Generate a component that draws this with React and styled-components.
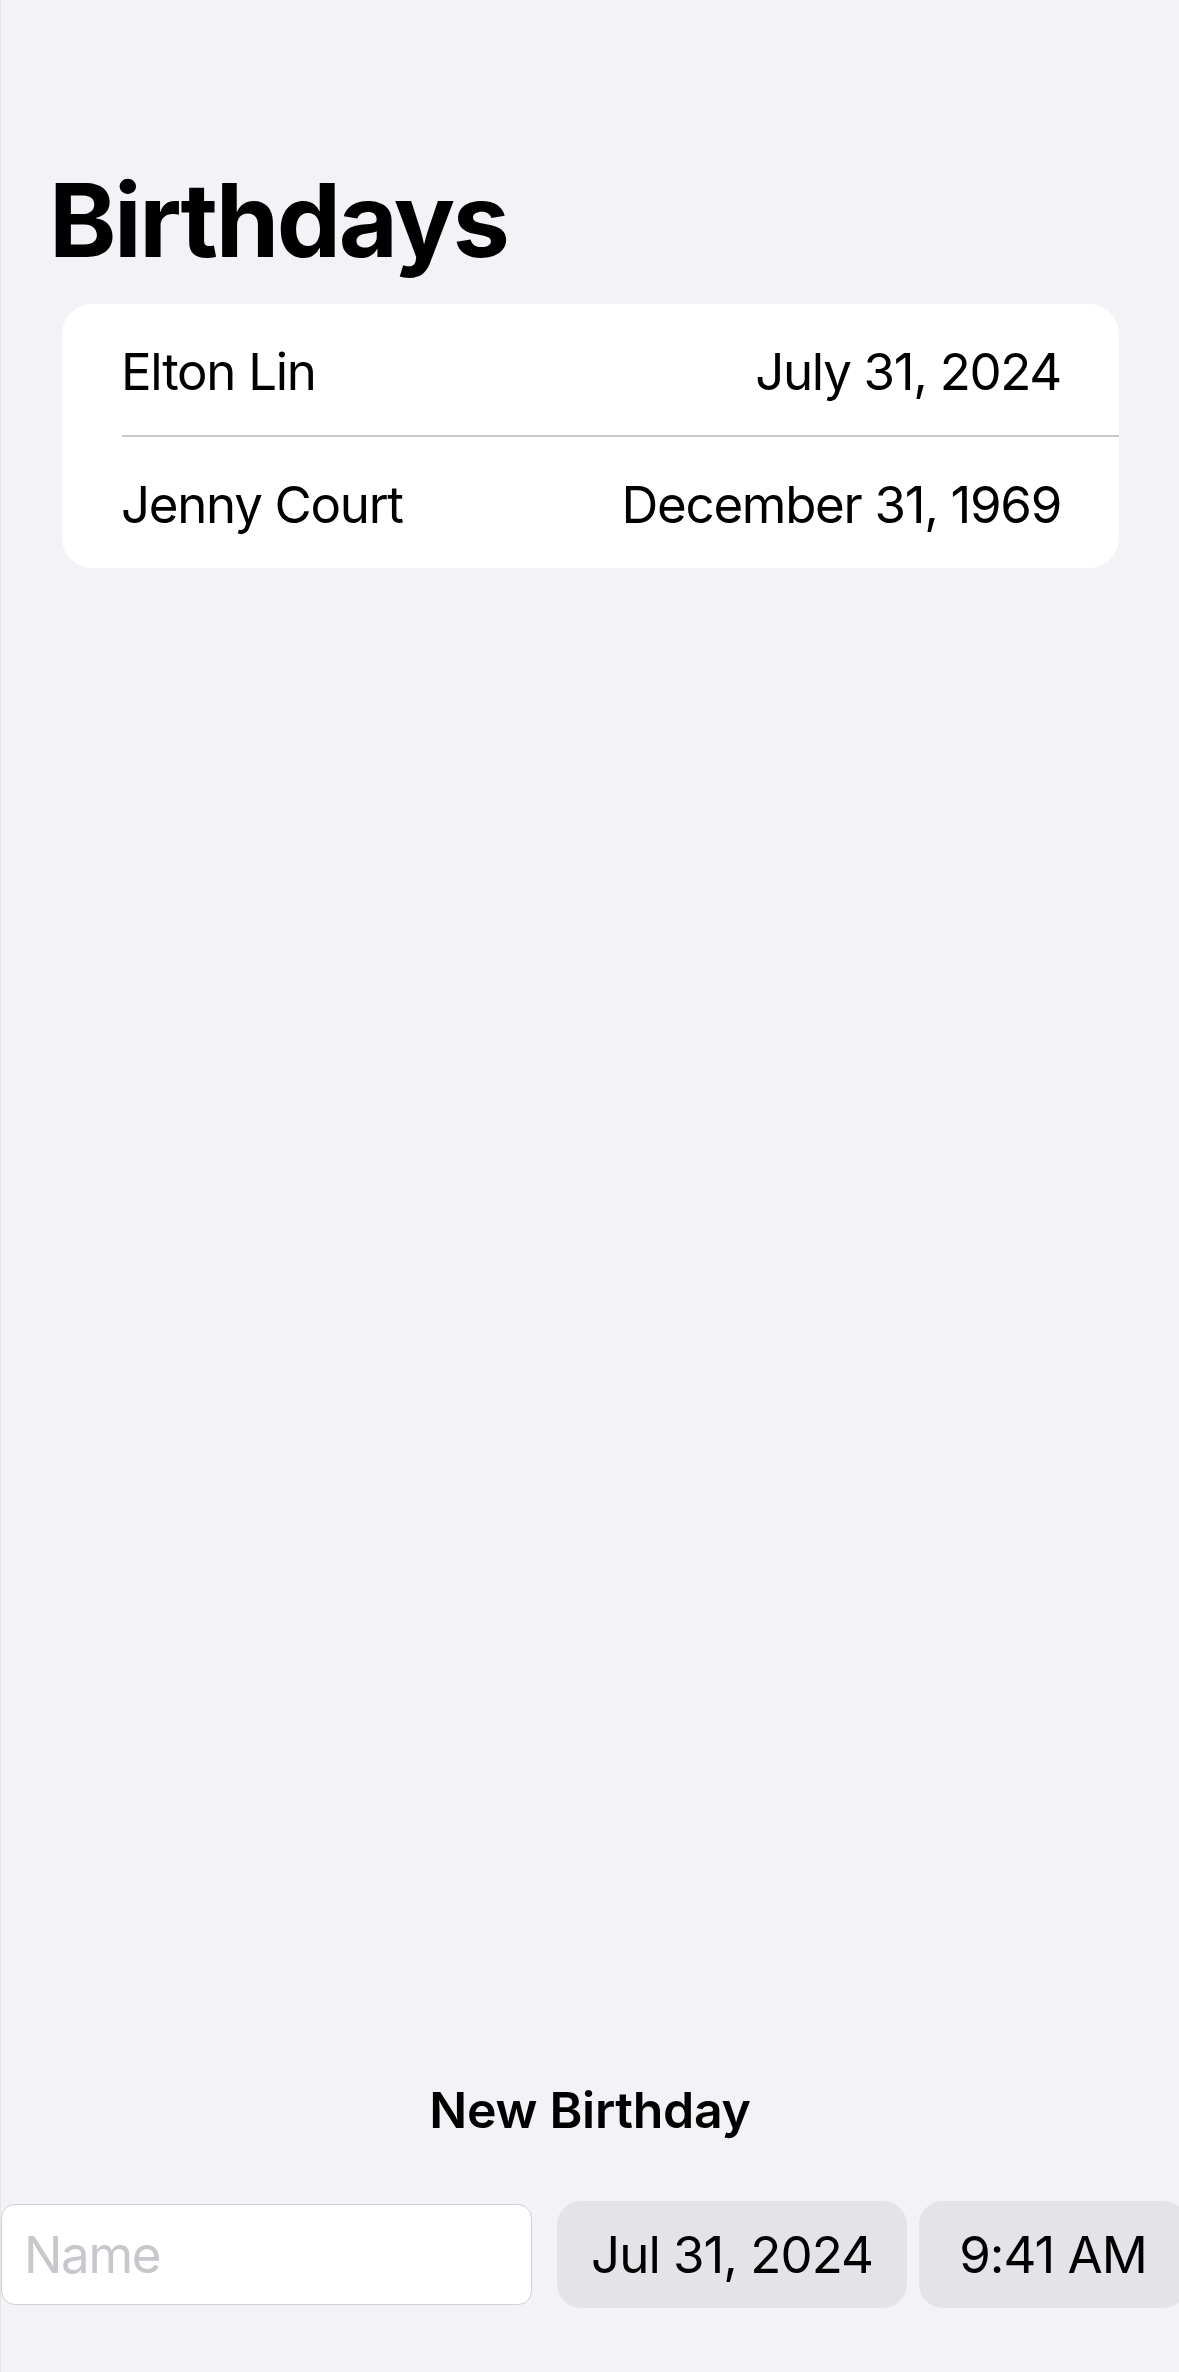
import React from 'react';
import styled, { createGlobalStyle } from 'styled-components';

const GlobalStyle = createGlobalStyle`
  html, body {
    margin: 0;
    padding: 0;
    background: #f2f2f7;
  }
  body {
    font-family: Inter, "Noto Sans", "Liberation Sans", sans-serif;
    -webkit-font-smoothing: antialiased;
  }
`;

const Page = styled.div`
  display: flex;
  flex-direction: column;
  width: 1179px;
  height: 2372px;
  box-sizing: border-box;
  background: #f2f2f7;
  border-left: 1px solid #e6e6eb;
  overflow: hidden;
`;

const Title = styled.h1`
  margin: 159px 0 0 48px;
  font-size: 102px;
  line-height: 1.2;
  font-weight: 700;
  letter-spacing: -2.4px;
  color: #000;
`;

const Card = styled.div`
  margin: 23px 60px 0 61px;
  background: #fff;
  border-radius: 30px;
  overflow: hidden;
`;

const Row = styled.div`
  display: flex;
  align-items: center;
  justify-content: space-between;
  height: 131px;
  box-sizing: border-box;
  padding: 4px 58px 0 59px;
  font-size: 51px;
  line-height: 1.2;
  letter-spacing: -1.3px;
  color: #000;
`;

const Separator = styled.div`
  height: 1.5px;
  margin-left: 60px;
  background: #c6c6c8;
`;

const Spacer = styled.div`
  flex: 1;
`;

const Footer = styled.div`
  display: flex;
  flex-direction: column;
  align-items: center;
  padding-bottom: 64px;
`;

const FooterTitle = styled.h2`
  margin: 0 0 61px;
  font-size: 50px;
  line-height: 1.2;
  font-weight: 600;
  letter-spacing: -0.3px;
  color: #000;
`;

const Controls = styled.div`
  display: flex;
  align-items: center;
  align-self: stretch;
`;

const NameInput = styled.input`
  width: 531px;
  height: 101px;
  box-sizing: border-box;
  margin-right: 25px;
  padding: 0 0 0 22px;
  border: 1.5px solid #d1d1d6;
  border-radius: 14px;
  background: #fff;
  font-family: inherit;
  font-size: 51px;
  letter-spacing: -1.3px;
  color: #000;
  outline: none;

  &::placeholder {
    color: #c7c7cc;
  }
`;

const PickerButton = styled.button`
  flex: none;
  display: flex;
  align-items: center;
  justify-content: center;
  width: ${(p) => p.$width}px;
  height: 107px;
  margin-right: ${(p) => p.$gap || 0}px;
  padding: 0;
  border: none;
  border-radius: 24px;
  background: #e3e3e8;
  font-family: inherit;
  font-size: 51px;
  letter-spacing: -1px;
  color: #000;
`;

const birthdays = [
  { name: 'Elton Lin', date: 'July 31, 2024' },
  { name: 'Jenny Court', date: 'December 31, 1969' },
];

const App = () => {
  return (
    <Page>
      <GlobalStyle />
      <Title>Birthdays</Title>
      <Card>
        {birthdays.map((b, i) => (
          <React.Fragment key={b.name}>
            {i > 0 && <Separator />}
            <Row>
              <span>{b.name}</span>
              <span>{b.date}</span>
            </Row>
          </React.Fragment>
        ))}
      </Card>
      <Spacer />
      <Footer>
        <FooterTitle>New Birthday</FooterTitle>
        <Controls>
          <NameInput placeholder="Name" />
          <PickerButton $width={350} $gap={12}>Jul 31, 2024</PickerButton>
          <PickerButton $width={268}>9:41 AM</PickerButton>
        </Controls>
      </Footer>
    </Page>
  );
};

export default App;
